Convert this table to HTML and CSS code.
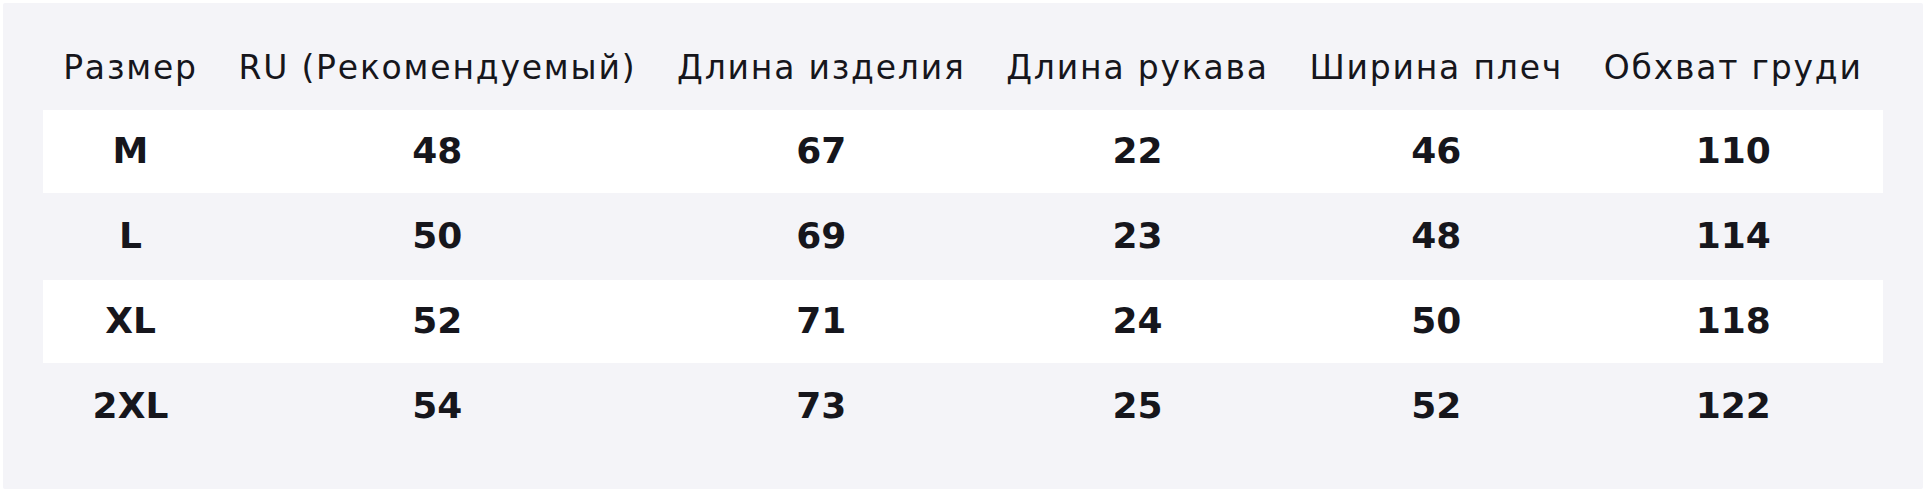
FILE: index.html
```html
<!DOCTYPE html>
<html lang="ru">
<head>
<meta charset="utf-8">
<title>Таблица размеров</title>
<link rel="stylesheet" href="styles.css">
</head>
<body>
<div class="panel">
  <table class="sizes">
    <thead>
      <tr>
        <th>Размер</th>
        <th>RU (Рекомендуемый)</th>
        <th>Длина изделия</th>
        <th>Длина рукава</th>
        <th>Ширина плеч</th>
        <th>Обхват груди</th>
      </tr>
    </thead>
    <tbody>
      <tr><td>M</td><td>48</td><td>67</td><td>22</td><td>46</td><td>110</td></tr>
      <tr><td>L</td><td>50</td><td>69</td><td>23</td><td>48</td><td>114</td></tr>
      <tr><td>XL</td><td>52</td><td>71</td><td>24</td><td>50</td><td>118</td></tr>
      <tr><td>2XL</td><td>54</td><td>73</td><td>25</td><td>52</td><td>122</td></tr>
    </tbody>
  </table>
</div>
</body>
</html>
```
FILE: styles.css
```css
html, body {
  margin: 0;
  padding: 0;
  background: #ffffff;
}
body {
  padding: 3px;
  font-family: "DejaVu Sans", sans-serif;
  color: #16161c;
}
.panel {
  background: #f4f4f8;
  padding: 40px 40px 39px;
  height: 486px;
  box-sizing: border-box;
  border-radius: 2px;
}
.sizes {
  width: 100%;
  border-collapse: separate;
  border-spacing: 0 2px;
}
.sizes th {
  font-weight: normal;
  font-size: 33px;
  letter-spacing: 1.8px;
  line-height: 38px;
  padding: 4px 20px 21px;
  text-align: center;
  white-space: nowrap;
}
.sizes td {
  font-weight: bold;
  font-size: 36px;
  line-height: 42px;
  text-align: center;
  padding: 20px 20px 21px;
}
.sizes tbody tr:nth-child(odd) td {
  background: #ffffff;
}
```
